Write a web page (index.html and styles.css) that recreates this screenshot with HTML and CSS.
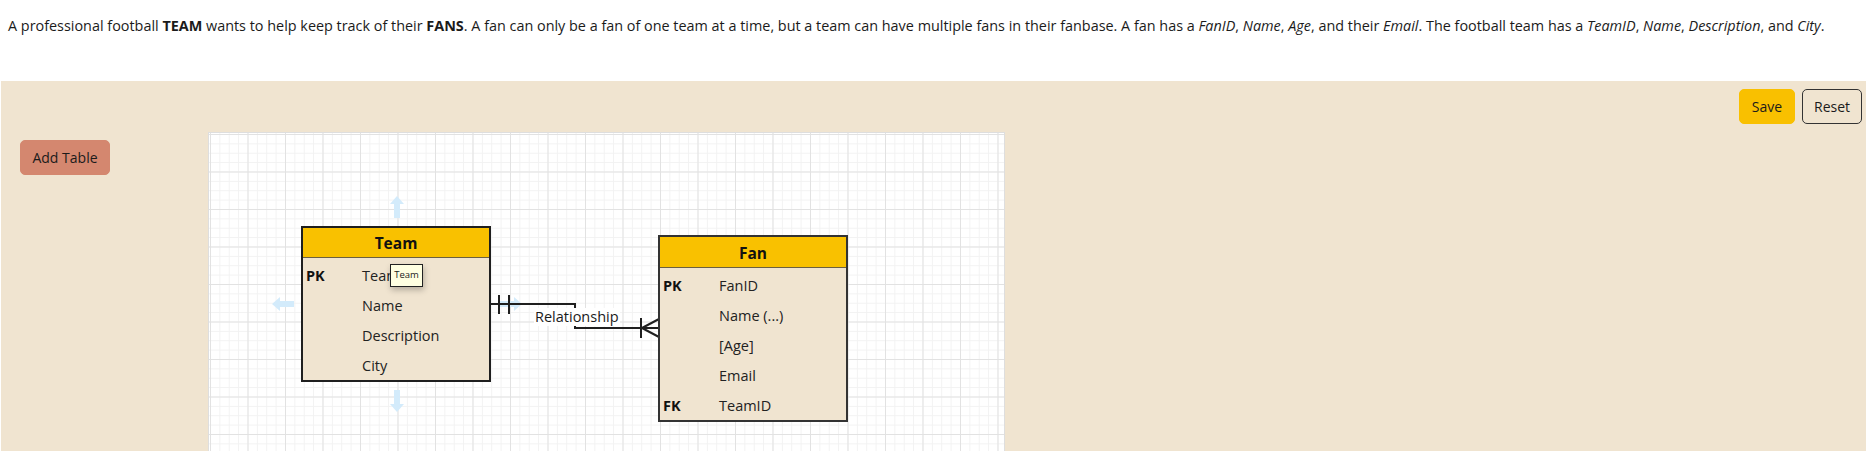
FILE: index.html
```html
<!DOCTYPE html>
<html>
<head>
<meta charset="utf-8">
<link rel="stylesheet" href="styles.css">
</head>
<body>
<p class="intro">A professional football <b>TEAM</b> wants to help keep track of their <b>FANS</b>. A fan can only be a fan of one team at a time, but a team can have multiple fans in their fanbase. A fan has a <i>FanID</i>, <i>Name</i>, <i>Age</i>, and their <i>Email</i>. The football team has a <i>TeamID</i>, <i>Name</i>, <i>Description</i>, and <i>City</i>.</p>
<div class="panel">
  <div class="toolbar">
    <button class="btn btn-save">Save</button>
    <button class="btn btn-reset">Reset</button>
  </div>
  <div class="workspace">
    <div class="sidebar">
      <button class="btn btn-add">Add Table</button>
    </div>
    <div class="canvas">
      <svg class="links" width="795" height="360" viewBox="0 0 795 360">
        <g fill="#d3ebfb">
          <polygon points="188,63 195,71 191,71 191,85 185,85 185,71 181,71"/>
          <polygon points="63,171 71,164 71,168 85,168 85,174 71,174 71,178"/>
          <polygon points="188,279 195,271 191,271 191,257 185,257 185,271 181,271"/>
          <polygon points="313,171 305,164 305,168 291,168 291,174 305,174 305,178"/>
        </g>
        <g stroke="#1f1f1f" stroke-width="2" fill="none">
          <polyline points="282,171 366,171 366,195 450,195"/>
          <line x1="290" y1="162" x2="290" y2="181"/>
          <line x1="300" y1="162" x2="300" y2="181"/>
          <line x1="432" y1="185" x2="432" y2="205"/>
          <line x1="433" y1="195" x2="450" y2="186"/>
          <line x1="433" y1="195" x2="450" y2="204"/>
        </g>
      </svg>
      <div class="rel-label">Relationship</div>

      <div class="entity entity-team">
        <div class="entity-head">Team</div>
        <div class="entity-body">
          <div class="row"><span class="key">PK</span><span class="field">TeamID</span></div>
          <div class="row"><span class="key"></span><span class="field">Name</span></div>
          <div class="row"><span class="key"></span><span class="field">Description</span></div>
          <div class="row"><span class="key"></span><span class="field">City</span></div>
        </div>
      </div>

      <div class="tooltip">Team</div>

      <div class="entity entity-fan">
        <div class="entity-head">Fan</div>
        <div class="entity-body">
          <div class="row"><span class="key">PK</span><span class="field">FanID</span></div>
          <div class="row"><span class="key"></span><span class="field">Name (...)</span></div>
          <div class="row"><span class="key"></span><span class="field">[Age]</span></div>
          <div class="row"><span class="key"></span><span class="field">Email</span></div>
          <div class="row"><span class="key">FK</span><span class="field">TeamID</span></div>
        </div>
      </div>
    </div>
  </div>
</div>
</body>
</html>
```
FILE: styles.css
```css
html, body {
  margin: 0;
  padding: 0;
  background: #ffffff;
  overflow: hidden;
  font-family: "Open Sans", "Noto Sans", sans-serif;
  color: #1b1b1b;
}

.intro {
  margin: 0;
  height: 81px;
  box-sizing: border-box;
  padding: 16px 8px 0 8px;
  font-size: 14.4px;
  line-height: 20px;
  white-space: nowrap;
}

.panel {
  margin-left: 1px;
  background: #f0e4d0;
  height: 370px;
  overflow: hidden;
  display: flex;
  flex-direction: column;
}

.toolbar {
  display: flex;
  justify-content: flex-end;
  gap: 7px;
  padding: 8px 4px 0 0;
}

.btn {
  font-family: "Open Sans", "Noto Sans", sans-serif;
  font-size: 14px;
  color: #1b1b1b;
  height: 35px;
  border-radius: 5px;
  border: 1px solid transparent;
  padding: 0;
  cursor: pointer;
}

.btn-save {
  width: 56px;
  background: #f9c000;
  border-color: #f9c000;
}

.btn-reset {
  width: 60px;
  background: transparent;
  border-color: #333333;
}

.workspace {
  display: flex;
  margin-top: 8px;
}

.sidebar {
  width: 207px;
  flex: none;
}

.btn-add {
  margin: 8px 0 0 19px;
  width: 90px;
  background: #d4876f;
  border-color: #d4876f;
}

.canvas {
  position: relative;
  flex: none;
  width: 795px;
  height: 360px;
  border: 1px solid #dedede;
  background-color: #ffffff;
  background-image:
    linear-gradient(to right, #e2e2e2 1px, transparent 1px),
    linear-gradient(to bottom, #e2e2e2 1px, transparent 1px),
    linear-gradient(to right, #f2f2f2 1px, transparent 1px),
    linear-gradient(to bottom, #f2f2f2 1px, transparent 1px);
  background-size: 37.5px 37.5px, 37.5px 37.5px, 9.375px 9.375px, 9.375px 9.375px;
  background-position: 1px 1px, 1px 1px, 1px 1px, 1px 1px;
}

.links {
  position: absolute;
  left: 0;
  top: 0;
}

.rel-label {
  position: absolute;
  left: 325px;
  top: 175px;
  height: 18px;
  line-height: 18px;
  padding: 0 1px;
  background: #ffffff;
  font-size: 14.5px;
  color: #1b1b1b;
}

.entity {
  position: absolute;
  box-sizing: border-box;
  border: 2px solid #1f1f1f;
  background: #f0e4d0;
  display: flex;
  flex-direction: column;
}

.entity-team {
  left: 92px;
  top: 93px;
  width: 190px;
  height: 156px;
}

.entity-fan {
  left: 449px;
  top: 102px;
  width: 190px;
  height: 187px;
  border-color: #333333;
}

.entity-head {
  height: 32px;
  padding-top: 1px;
  box-sizing: border-box;
  background: #f9c100;
  border-bottom: 1px solid #6b6040;
  display: flex;
  align-items: center;
  justify-content: center;
  font-weight: 700;
  font-size: 15.5px;
  color: #111111;
}

.entity-body {
  padding-top: 2px;
}

.row {
  display: flex;
  align-items: center;
  height: 30px;
  font-size: 14.5px;
}

.key {
  width: 56px;
  padding-left: 3px;
  font-weight: 700;
  color: #111111;
  flex: none;
}

.field {
  color: #222222;
}

.tooltip {
  position: absolute;
  left: 181px;
  top: 131px;
  width: 33px;
  height: 23px;
  box-sizing: border-box;
  border: 1px solid #222222;
  background: #ffffe1;
  font-size: 9.5px;
  line-height: 20px;
  text-align: center;
  color: #222222;
  box-shadow: 1px 3px 6px rgba(0, 0, 0, 0.25);
}
```
